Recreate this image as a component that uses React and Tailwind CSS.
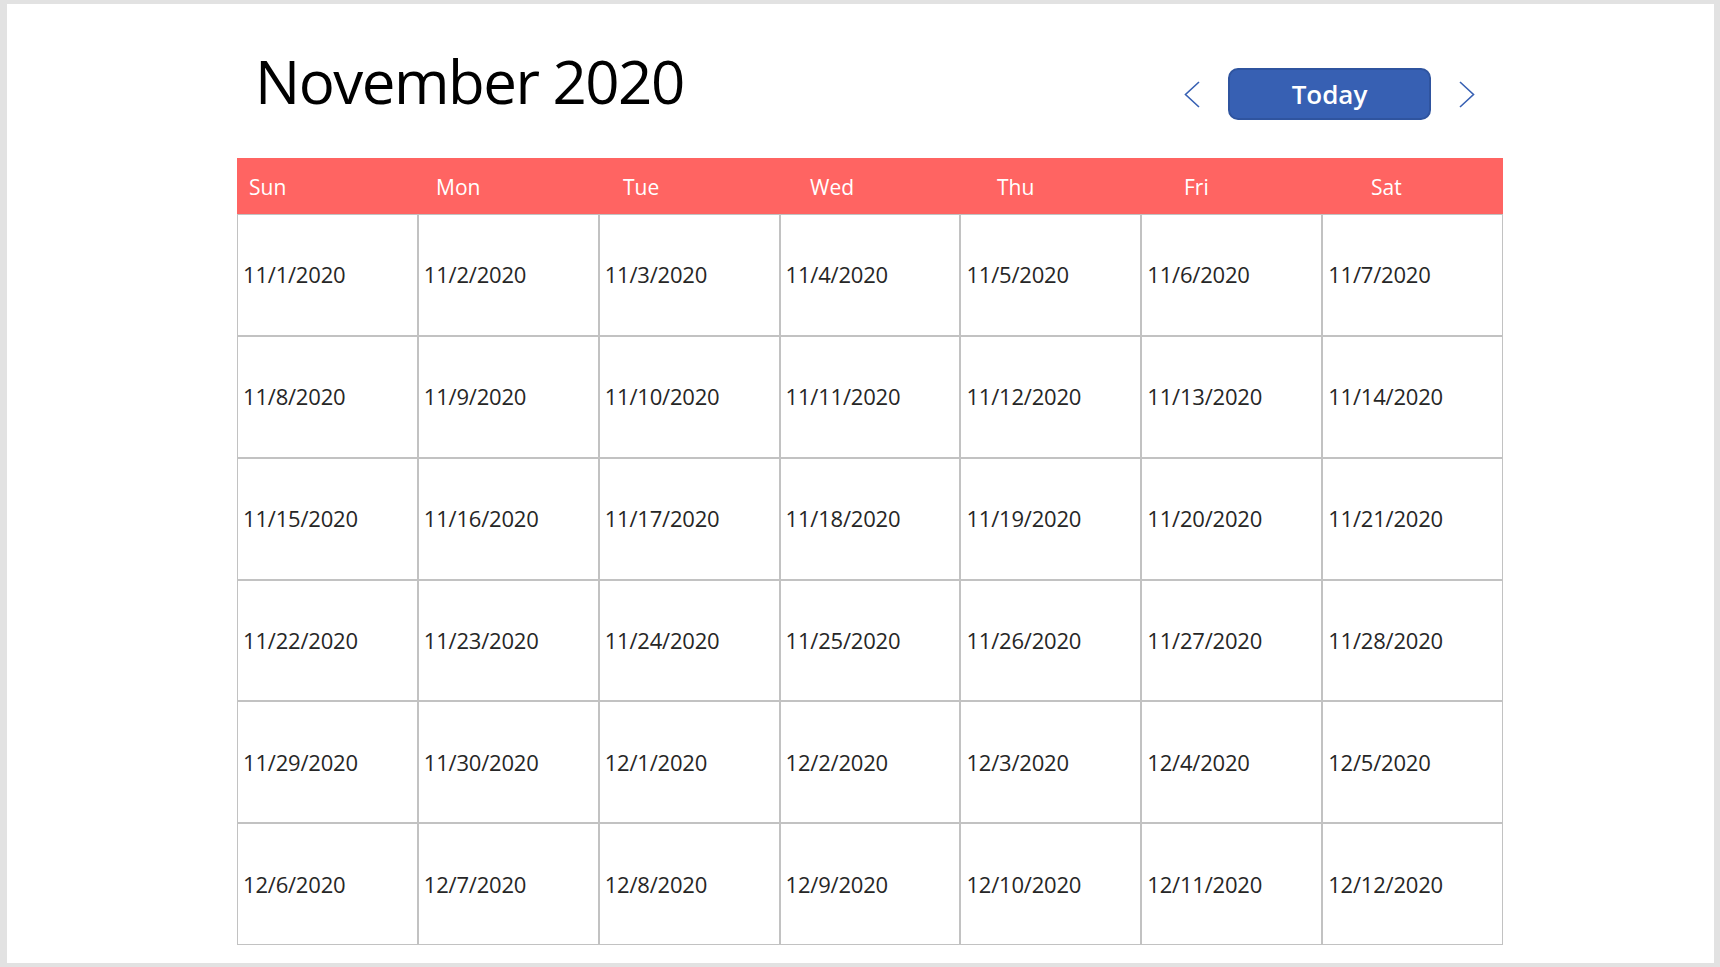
import React from 'react'

const days = ['Sun', 'Mon', 'Tue', 'Wed', 'Thu', 'Fri', 'Sat']

// six weeks starting Sunday 11/1/2020
const dates = Array.from({ length: 42 }, (_, i) => {
  const d = new Date(2020, 10, 1 + i)
  return `${d.getMonth() + 1}/${d.getDate()}/${d.getFullYear()}`
})

function Chevron({ dir }) {
  return (
    <svg width="16" height="27" viewBox="0 0 16 27" className="shrink-0">
      <polyline
        points={dir === 'left' ? '15,1 1.5,13.5 15,26' : '1,1 14.5,13.5 1,26'}
        fill="none"
        stroke="#3760b3"
        strokeWidth="1.6"
      />
    </svg>
  )
}

export default function App() {
  return (
    <div className="w-full h-[967px] bg-[#e2e2e2] pt-[4px] pb-[4px] pl-[7px] pr-[6px] font-['Open_Sans','Noto_Sans',sans-serif]">
      <div className="h-full bg-white pl-[230px]">
        <div className="w-[1266px] h-[154px] flex items-start justify-between">
          <h1 className="mt-[47px] pl-[18px] text-[60px] leading-[60px] font-normal tracking-[-1.5px] text-black">November 2020</h1>
          <div className="mt-[64px] mr-[28px] flex items-center">
            <Chevron dir="left" />
            <button className="ml-[28px] mr-[28px] w-[203px] h-[52px] rounded-[10px] bg-[#3760b3] border-2 border-[#2f549f] text-white text-[26px] font-semibold leading-none">
              Today
            </button>
            <Chevron dir="right" />
          </div>
        </div>

        <div className="w-[1266px]">
          <div className="h-[56px] bg-[#ff6462] flex items-center pt-[4px] overflow-hidden">
            {days.map((d) => (
              <div key={d} className="w-[187px] shrink-0 pl-[12px] text-white text-[21px]">
                {d}
              </div>
            ))}
          </div>
          <div className="grid grid-cols-7 grid-rows-6 h-[731px]">
            {dates.map((d) => (
              <div
                key={d}
                className="border border-[#c2c2c2] flex items-center pl-[5px] text-[22px] tracking-[-0.2px] text-[#262626]"
              >
                {d}
              </div>
            ))}
          </div>
        </div>
      </div>
    </div>
  )
}
